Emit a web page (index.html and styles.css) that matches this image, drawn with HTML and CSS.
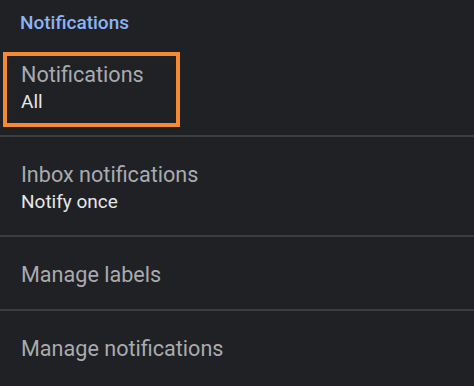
FILE: index.html
```html
<!DOCTYPE html>
<html>
<head>
<meta charset="utf-8">
<link rel="stylesheet" href="styles.css">
</head>
<body>
<div class="screen">
  <div class="section-title">Notifications</div>
  <div class="row first">
    <div class="highlight">
      <div class="title">Notifications</div>
      <div class="sub">All</div>
    </div>
  </div>
  <div class="divider"></div>
  <div class="row">
    <div class="title">Inbox notifications</div>
    <div class="sub">Notify once</div>
  </div>
  <div class="divider"></div>
  <div class="row single">
    <div class="title">Manage labels</div>
  </div>
  <div class="divider"></div>
  <div class="row single">
    <div class="title">Manage notifications</div>
  </div>
</div>
</body>
</html>
```

FILE: styles.css
```css
html, body {
  margin: 0;
  padding: 0;
  background: #202124;
}
.screen {
  width: 474px;
  height: 386px;
  overflow: hidden;
  background: #202124;
  font-family: Roboto, "Noto Sans", sans-serif;
}
.section-title {
  padding: 10px 0 0 20px;
  font-size: 19px;
  line-height: 25px;
  font-weight: 500;
  color: #8ab4f8;
}
.row {
  padding: 24px 0 21px 21px;
}
.row.first {
  padding: 17px 0 8px 3px;
}
.row.single {
  padding-bottom: 20px;
}
.highlight {
  width: 155px;
  border: 4px solid #f48b34;
  padding: 5px 0 9px 14px;
}
.title {
  font-size: 21.6px;
  line-height: 28px;
  color: #a8abaf;
}
.sub {
  font-size: 19px;
  line-height: 25px;
  color: #e6e7e9;
}
.divider {
  height: 2px;
  background: #3c3d41;
}
```
